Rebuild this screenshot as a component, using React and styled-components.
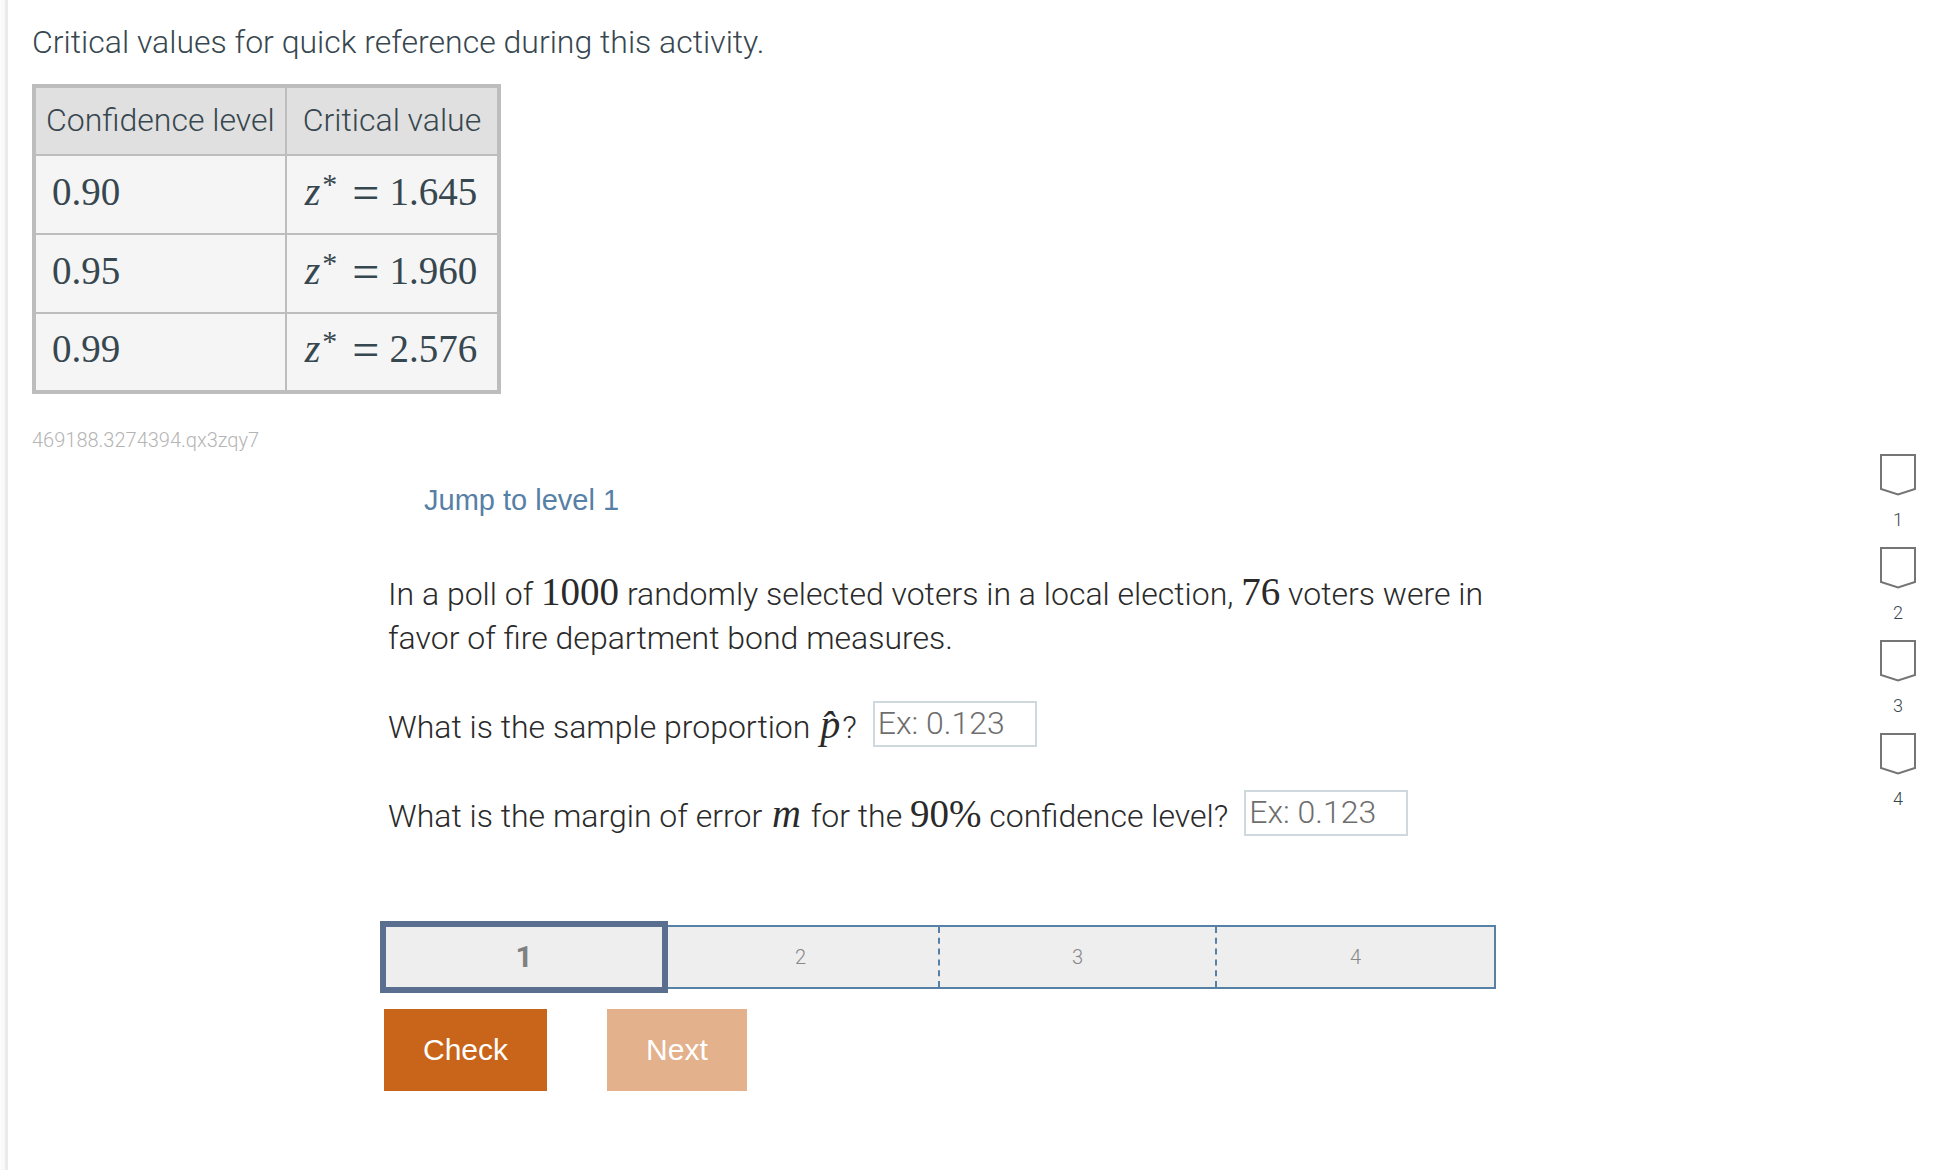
import React from "react";
import styled, { createGlobalStyle, css } from "styled-components";

const Global = createGlobalStyle`
  *, *::before, *::after { box-sizing: border-box; }
  body { margin: 0; background: #fff; }
`;

const sans = `Roboto, "Liberation Sans", sans-serif`;
const helvetica = `"Liberation Sans", Roboto, sans-serif`;
const serif = `"Liberation Serif", serif`;

const Page = styled.div`
  min-height: 100vh;
  padding: 20px 26px 40px 32px;
  background: linear-gradient(to right, #fdfdfd, #f7f7f7 5px, #ebebeb 5px, #ebebeb 8px, #fff 8px);
  font-family: ${sans};
  font-weight: 300;
  font-size: 32px;
  line-height: 44px;
  color: #37474f;
`;

const Intro = styled.p`
  margin: 0 0 20px;
`;

const ValuesTable = styled.table`
  border-collapse: collapse;
  border: 4px solid #bdbdbd;
  background: #f5f5f5;
`;

const HeadCell = styled.th`
  height: 69px;
  padding: 0 10px 2px;
  border: 2px solid #bdbdbd;
  background: #e0e0e0;
  font-weight: 300;
  text-align: left;

  & + & {
    padding: 0 16px 2px;
  }
`;

const Cell = styled.td`
  height: 79px;
  padding: 0 16px 2px;
  border: 2px solid #bdbdbd;
  white-space: nowrap;
`;

const MathText = styled.span`
  font-family: ${serif};
  font-weight: 400;
  font-size: 39px;
  line-height: 40px;
`;

const Variable = styled.i`
  margin: 0 2px;
  font-family: ${serif};
  font-weight: 400;
  font-size: 40px;
  line-height: 40px;
`;

const Star = styled.sup`
  font-size: 30px;
  line-height: 0;
  vertical-align: 11px;
`;

const Equals = styled.span`
  margin: 0 10px 0 15px;
  font-size: 48px;
  line-height: 0;
  vertical-align: -4px;
`;

const ActivityId = styled.div`
  margin-top: 32px;
  font-size: 20px;
  line-height: 28px;
  color: #b4b4b4;
`;

const Activity = styled.div`
  display: grid;
  grid-template-columns: minmax(0, 1fr) 36px;
  gap: 32px;
`;

const Content = styled.main`
  width: 100%;
  max-width: 1112px;
  margin: 0 auto;
  padding-top: 23px;
`;

const JumpLink = styled.a`
  display: inline-block;
  margin-left: 40px;
  font-family: ${helvetica};
  font-weight: 400;
  font-size: 29px;
  line-height: 44px;
  color: #5780a6;
  text-decoration: none;
`;

const Question = styled.div`
  margin: 50px 4px 0;
  color: #2a2a2a;
`;

const Paragraph = styled.p`
  margin: 0;
`;

const Field = styled.div`
  display: flex;
  flex-wrap: wrap;
  align-items: flex-start;
  gap: 16px;
  margin-top: 41px;
`;

const FieldLabel = styled.label`
  padding-top: 4px;
`;

const Answer = styled.input`
  width: 164px;
  height: 46px;
  padding: 0 3px 2px;
  border: 2px solid #cfd8dc;
  border-radius: 0;
  background: #fff;
  font-family: ${sans};
  font-weight: 300;
  font-size: 32px;
  color: #2a2a2a;

  &::placeholder {
    color: #6e6e6e;
    opacity: 1;
  }
`;

const Progress = styled.ol`
  display: grid;
  grid-template-columns: repeat(4, 1fr);
  height: 64px;
  margin: 87px 0 0;
  padding: 0;
  border: 2px solid #5780a6;
  background: #eee;
  list-style: none;
`;

const Step = styled.li`
  display: flex;
  align-items: center;
  justify-content: center;
  border-right: 2px dashed #5780a6;
  font-size: 20px;
  color: #888;

  &:last-child {
    border-right: 0;
  }

  ${(p) =>
    p.$current &&
    css`
      z-index: 1;
      margin: -6px -5px -6px -6px;
      border: 6px solid #5a6f8f;
      background: #eee;
      font-weight: 700;
      font-size: 30px;
      color: #808080;

      &:last-child {
        border-right: 6px solid #5a6f8f;
      }
    `}
`;

const Actions = styled.div`
  display: flex;
  gap: 60px;
  margin-top: 20px;
`;

const ActionButton = styled.button`
  height: 82px;
  padding: 0 39px;
  border: 0;
  background: #c9651a;
  font-family: ${helvetica};
  font-size: 30px;
  color: #fff;

  &:disabled {
    background: #e4b18d;
  }
`;

const Rail = styled.ol`
  display: flex;
  flex-direction: column;
  gap: 14px;
  margin: 0;
  padding: 0;
  list-style: none;
`;

const Level = styled.li`
  display: flex;
  flex-direction: column;
  align-items: center;
  gap: 10px;
  font-size: 18px;
  line-height: 27px;
`;

const Flag = () => (
  <svg width="36" height="42" viewBox="0 0 36 42" fill="none" aria-hidden="true">
    <path d="M1 1H35V35L18 40.5L1 35Z" stroke="#757575" strokeWidth="2" />
  </svg>
);

const values = [
  ["0.90", "1.645"],
  ["0.95", "1.960"],
  ["0.99", "2.576"],
];
const levels = [1, 2, 3, 4];

export default function App() {
  return (
    <Page>
      <Global />
      <Intro>Critical values for quick reference during this activity.</Intro>
      <ValuesTable>
        <thead>
          <tr>
            <HeadCell scope="col">Confidence level</HeadCell>
            <HeadCell scope="col">Critical value</HeadCell>
          </tr>
        </thead>
        <tbody>
          {values.map(([level, z]) => (
            <tr key={level}>
              <Cell>
                <MathText>{level}</MathText>
              </Cell>
              <Cell>
                <MathText>
                  <Variable>z</Variable>
                  <Star>*</Star>
                  <Equals>=</Equals>
                  {z}
                </MathText>
              </Cell>
            </tr>
          ))}
        </tbody>
      </ValuesTable>
      <ActivityId>469188.3274394.qx3zqy7</ActivityId>
      <Activity>
        <Content>
          <JumpLink href="#level-1">Jump to level 1</JumpLink>
          <Question>
            <Paragraph>
              In a poll of <MathText>1000</MathText> randomly selected voters in a local election,{" "}
              <MathText>76</MathText> voters were in favor of fire department bond measures.
            </Paragraph>
            <Field>
              <FieldLabel htmlFor="proportion">
                What is the sample proportion <Variable>p̂</Variable>?
              </FieldLabel>
              <Answer id="proportion" type="text" placeholder="Ex: 0.123" />
            </Field>
            <Field>
              <FieldLabel htmlFor="margin">
                What is the margin of error <Variable>m</Variable> for the <MathText>90%</MathText>{" "}
                confidence level?
              </FieldLabel>
              <Answer id="margin" type="text" placeholder="Ex: 0.123" />
            </Field>
          </Question>
          <Progress>
            {levels.map((n) => (
              <Step key={n} $current={n === 1}>
                {n}
              </Step>
            ))}
          </Progress>
          <Actions>
            <ActionButton type="button">Check</ActionButton>
            <ActionButton type="button" disabled>
              Next
            </ActionButton>
          </Actions>
        </Content>
        <Rail>
          {levels.map((n) => (
            <Level key={n}>
              <Flag />
              {n}
            </Level>
          ))}
        </Rail>
      </Activity>
    </Page>
  );
}
